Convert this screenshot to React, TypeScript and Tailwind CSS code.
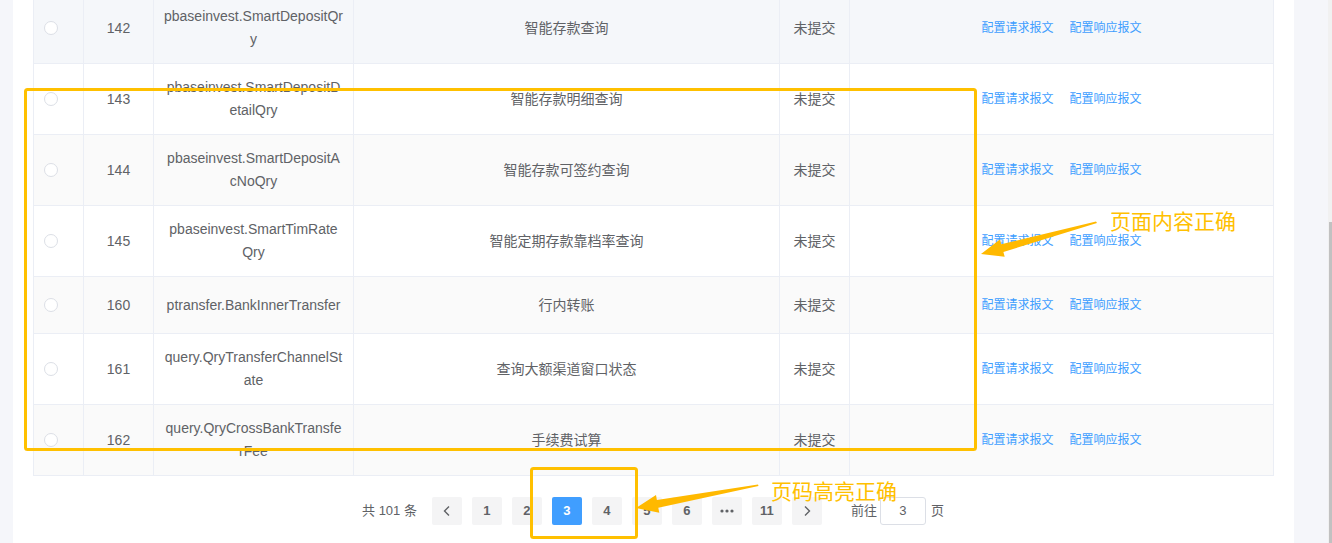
import React from "react";

type Row = { id: number; name: string[]; desc: string; bg: string };

const rows: Row[] = [
  { id: 142, name: ["pbaseinvest.SmartDepositQr", "y"], desc: "智能存款查询", bg: "bg-[#f5f7fa]" },
  { id: 143, name: ["pbaseinvest.SmartDepositD", "etailQry"], desc: "智能存款明细查询", bg: "bg-white" },
  { id: 144, name: ["pbaseinvest.SmartDepositA", "cNoQry"], desc: "智能存款可签约查询", bg: "bg-[#fafafa]" },
  { id: 145, name: ["pbaseinvest.SmartTimRate", "Qry"], desc: "智能定期存款靠档率查询", bg: "bg-white" },
  { id: 160, name: ["ptransfer.BankInnerTransfer"], desc: "行内转账", bg: "bg-[#fafafa]" },
  { id: 161, name: ["query.QryTransferChannelSt", "ate"], desc: "查询大额渠道窗口状态", bg: "bg-white" },
  { id: 162, name: ["query.QryCrossBankTransfe", "rFee"], desc: "手续费试算", bg: "bg-[#fafafa]" },
];

const cell = "border-r border-b border-[#ebeef5] py-3 px-[10px] flex items-center";

function PageBtn({ children, active }: { children: React.ReactNode; active?: boolean }) {
  return (
    <div
      className={
        "mx-[5px] w-[30px] h-[28px] rounded-[2px] flex items-center justify-center text-[13px] font-bold " +
        (active ? "bg-[#409eff] text-white" : "bg-[#f4f4f5] text-[#606266]")
      }
    >
      {children}
    </div>
  );
}

export default function App() {
  return (
    <div className="relative w-[1332px] h-[543px] overflow-hidden flex font-['Liberation_Sans','Noto_Sans_CJK_SC',sans-serif] text-[#606266]">
      <div className="w-[13px] bg-[#f5f6fa]" />
      <div className="w-[1281px] bg-white pl-[20px]">
        <div className="-mt-[7px] w-[1240px]">
          <div className="grid grid-cols-[50px_70px_200px_426px_70px_424px] border-l border-[#ebeef5] text-[14px] leading-[23px]">
            {rows.map((r) => (
              <React.Fragment key={r.id}>
                <div className={`${cell} ${r.bg}`}>
                  <span className="w-[14px] h-[14px] rounded-full border border-[#dcdfe6] bg-white" />
                </div>
                <div className={`${cell} ${r.bg} justify-center`}>{r.id}</div>
                <div className={`${cell} ${r.bg} flex-col justify-center`}>
                  {r.name.map((l, i) => (
                    <div key={i} className="whitespace-nowrap text-center">
                      {l}
                    </div>
                  ))}
                </div>
                <div className={`${cell} ${r.bg} justify-center`}>{r.desc}</div>
                <div className={`${cell} ${r.bg} justify-center`}>未提交</div>
                <div className={`${cell} ${r.bg} justify-center`}>
                  <div className="h-[32px] flex items-center gap-4 text-[12px] text-[#409eff]">
                    <span>配置请求报文</span>
                    <span>配置响应报文</span>
                  </div>
                </div>
              </React.Fragment>
            ))}
          </div>
          <div className="mt-[21px] flex justify-center items-center">
            <span className="text-[13px] mr-[10px]">共 101 条</span>
            <PageBtn>
              <svg width="10" height="12" viewBox="0 0 10 12">
                <polyline points="7,1.5 2.5,6 7,10.5" fill="none" stroke="#606266" strokeWidth="1.4" />
              </svg>
            </PageBtn>
            <PageBtn>1</PageBtn>
            <PageBtn>2</PageBtn>
            <PageBtn active>3</PageBtn>
            <PageBtn>4</PageBtn>
            <PageBtn>5</PageBtn>
            <PageBtn>6</PageBtn>
            <PageBtn>
              <svg width="14" height="4" viewBox="0 0 14 4">
                <circle cx="2" cy="2" r="1.6" fill="#606266" />
                <circle cx="7" cy="2" r="1.6" fill="#606266" />
                <circle cx="12" cy="2" r="1.6" fill="#606266" />
              </svg>
            </PageBtn>
            <PageBtn>11</PageBtn>
            <PageBtn>
              <svg width="10" height="12" viewBox="0 0 10 12">
                <polyline points="3,1.5 7.5,6 3,10.5" fill="none" stroke="#606266" strokeWidth="1.4" />
              </svg>
            </PageBtn>
            <div className="ml-[24px] flex items-center text-[13px]">
              <span>前往</span>
              <div className="ml-[3px] mr-[5px] w-[46px] h-[28px] border border-[#dcdfe6] rounded-[3px] flex items-center justify-center text-[13px]">
                3
              </div>
              <span>页</span>
            </div>
          </div>
        </div>
      </div>
      <div className="w-[34px] bg-[#f5f6fa]" />
      <div className="w-[4px] bg-[#f1f1f1] flex flex-col">
        <div className="h-[222px]" />
        <div className="flex-1 ml-[1px] bg-[#c1c1c1]" />
      </div>

      {/* annotations */}
      <svg className="absolute inset-0 pointer-events-none" width="1332" height="543" viewBox="0 0 1332 543">
        <rect x="25.5" y="89.5" width="950" height="360" rx="2" fill="none" stroke="#ffc000" strokeWidth="3" />
        <rect x="531.5" y="468.5" width="105" height="69" rx="2" fill="none" stroke="#ffc000" strokeWidth="3" />
        <polygon
          points="981,254 999.9,239.4 1001.2,244.2 1096,221.5 1097,223 1003.4,252 1004.7,256.8"
          fill="#ffb900"
        />
        <polygon
          points="636,508 656,495 656.9,500 758,484.5 758.5,486 658.3,507.8 659.3,512.8"
          fill="#ffb900"
        />
      </svg>
      <div className="absolute left-[1110px] top-[210px] text-[21px] leading-[21px] text-[#ffc000] font-['Noto_Sans_CJK_SC',sans-serif] whitespace-nowrap">
        页面内容正确
      </div>
      <div className="absolute left-[771px] top-[480px] text-[21px] leading-[21px] text-[#ffc000] font-['Noto_Sans_CJK_SC',sans-serif] whitespace-nowrap">
        页码高亮正确
      </div>
    </div>
  );
}
